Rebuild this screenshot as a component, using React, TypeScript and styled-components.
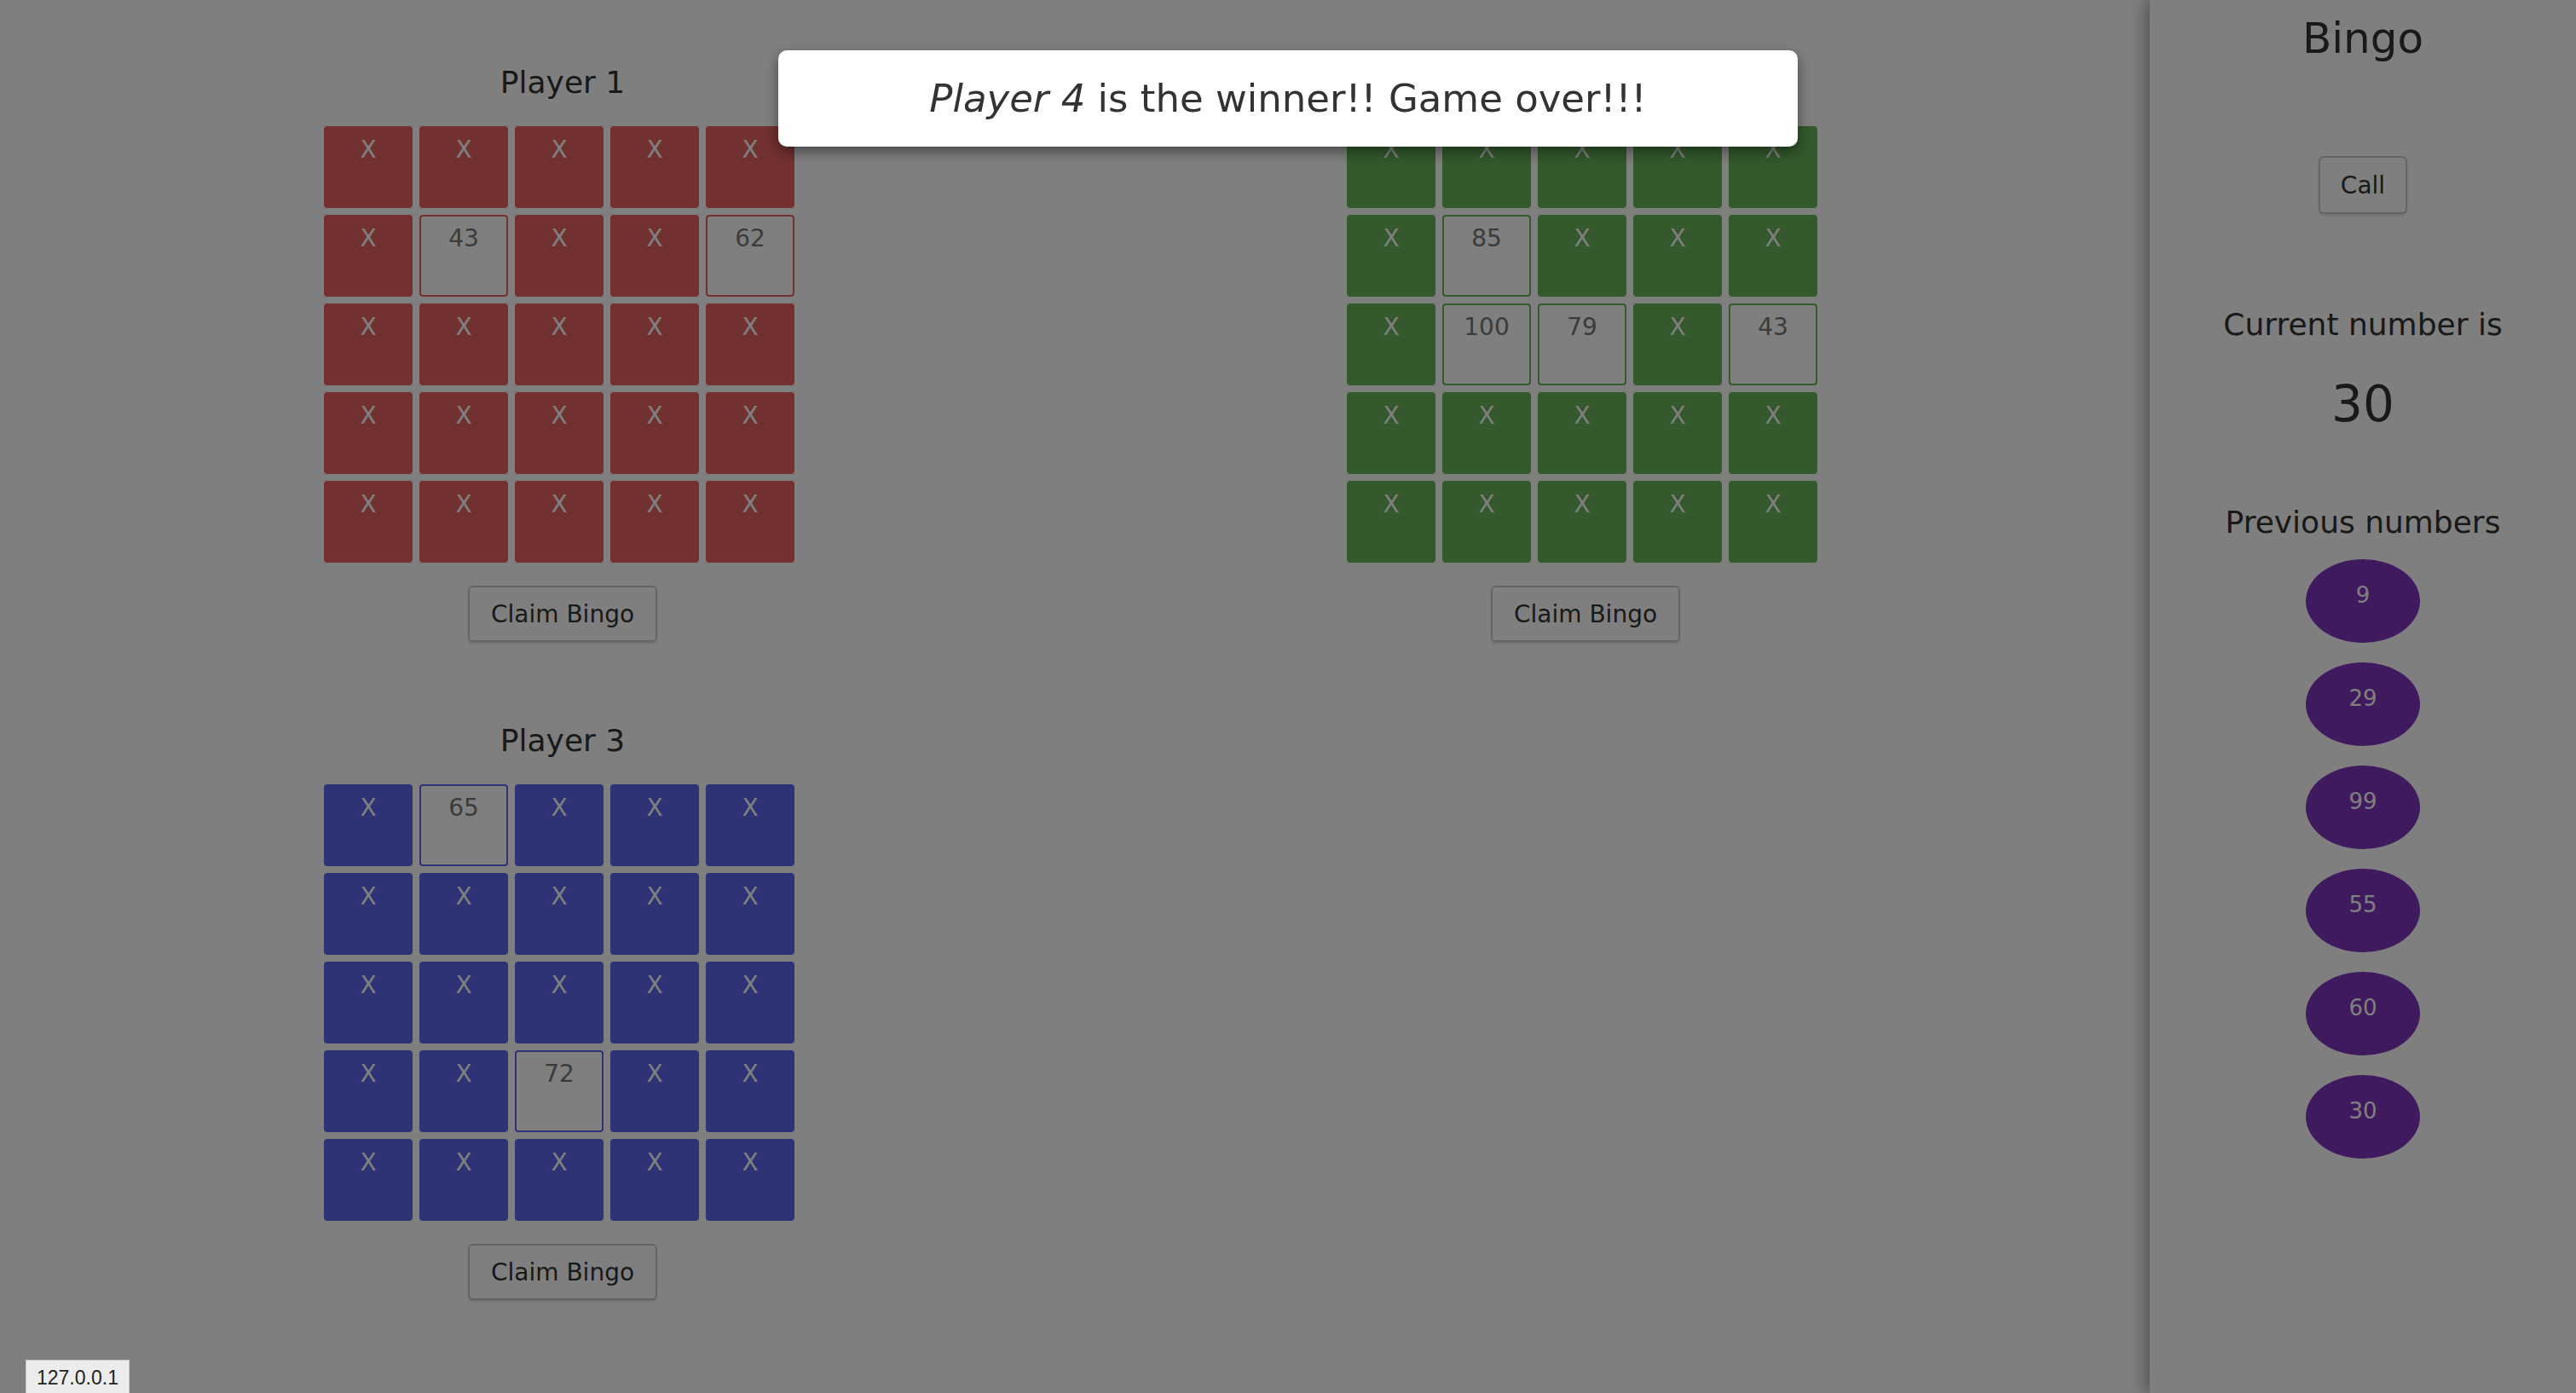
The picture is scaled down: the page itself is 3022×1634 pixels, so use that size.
import React from "react"
import styled, { createGlobalStyle } from "styled-components"

const GlobalStyle = createGlobalStyle`
  html, body {
    margin: 0;
    padding: 0;
    background: #fff;
  }
  * {
    box-sizing: border-box;
  }
`

type Player = {
  name: string
  color: string
  cells: (number | null)[]
}

const X = null

const players: Player[] = [
  {
    name: "Player 1",
    color: "#e46260",
    cells: [X, X, X, X, X, X, 43, X, X, 62, X, X, X, X, X, X, X, X, X, X, X, X, X, X, X],
  },
  {
    name: "Player 2",
    color: "#66b25a",
    cells: [X, X, X, X, X, X, 85, X, X, X, X, 100, 79, X, 43, X, X, X, X, X, X, X, X, X, X],
  },
  {
    name: "Player 3",
    color: "#5c64ec",
    cells: [X, 65, X, X, X, X, X, X, X, X, X, X, X, X, X, X, X, 72, X, X, X, X, X, X, X],
  },
]

const previous = [9, 29, 99, 55, 60, 30]

const Page = styled.div`
  display: flex;
  height: 100vh;
  overflow: hidden;
  font-family: "DejaVu Sans", "Noto Sans", sans-serif;
  color: #333;
`

const Main = styled.main`
  flex: 1;
  display: grid;
  grid-template-columns: repeat(2, 1200px);
  row-gap: 94px;
  align-content: start;
  padding: 75px 0 0 60px;
`

const Section = styled.section`
  display: flex;
  flex-direction: column;
  align-items: center;
`

const Title = styled.h3`
  margin: 0;
  font-size: 36px;
  line-height: 44px;
  font-weight: 400;
`

const Board = styled.div`
  display: grid;
  grid-template-columns: repeat(5, 104px);
  grid-auto-rows: 96px;
  gap: 8px;
  margin: 29px 8px 0 0;
`

const Cell = styled.div<{ $color: string; $marked: boolean }>`
  border: 2px solid ${p => p.$color};
  border-radius: 4px;
  background: ${p => (p.$marked ? p.$color : "transparent")};
  color: ${p => (p.$marked ? "#fff" : "#777")};
  font-size: 28px;
  line-height: 34px;
  padding-top: 9px;
  text-align: center;
`

const Button = styled.button<{ $w: number; $h: number }>`
  width: ${p => p.$w}px;
  height: ${p => p.$h}px;
  border: 2px solid #c8c8c8;
  border-radius: 6px;
  background: #fff;
  box-shadow: 0 2px 2px rgba(0, 0, 0, 0.12);
  font-family: inherit;
  font-size: 28px;
  color: #333;
  padding: 0;
`

const ClaimButton = styled(Button)`
  margin-top: 27px;
`

const Sidebar = styled.aside`
  position: relative;
  z-index: 1;
  width: 500px;
  flex-shrink: 0;
  background: #fff;
  box-shadow: -6px 0 18px rgba(0, 0, 0, 0.35);
  display: flex;
  flex-direction: column;
  align-items: center;
  padding-top: 15px;
`

const SideTitle = styled.h1`
  margin: 0;
  font-size: 50px;
  line-height: 60px;
  font-weight: 400;
`

const CallButton = styled(Button)`
  margin-top: 108px;
`

const Label = styled.div<{ $top: number }>`
  margin-top: ${p => p.$top}px;
  font-size: 36px;
  line-height: 44px;
`

const Current = styled.div`
  margin-top: 37px;
  font-size: 58px;
  line-height: 68px;
`

const Balls = styled.div`
  margin-top: 21px;
  display: flex;
  flex-direction: column;
  gap: 23px;
`

const Ball = styled.div`
  width: 134px;
  height: 98px;
  border-radius: 50%;
  background: #7e34bc;
  color: #fff;
  font-size: 26px;
  line-height: 32px;
  padding-top: 26px;
  text-align: center;
`

const Backdrop = styled.div`
  position: fixed;
  inset: 0;
  background: rgba(0, 0, 0, 0.5);
  z-index: 10;
`

const Modal = styled.div`
  position: fixed;
  top: 59px;
  left: 50%;
  transform: translateX(-50%);
  width: 1196px;
  height: 113px;
  z-index: 11;
  background: #fff;
  border-radius: 10px;
  box-shadow: 0 6px 16px rgba(0, 0, 0, 0.45);
  display: flex;
  align-items: center;
  justify-content: center;
  font-family: "DejaVu Sans", "Noto Sans", sans-serif;
  font-size: 45px;
  line-height: 54px;
  color: #333;
  white-space: pre;
`

const Status = styled.div`
  position: fixed;
  left: 30px;
  bottom: -14px;
  z-index: 12;
  background: #ececec;
  border: 1px solid #c9c9c9;
  padding: 7px 12px 18px;
  font-family: "Liberation Sans", Arial, sans-serif;
  font-size: 23px;
  line-height: 26px;
  color: #222;
`

function PlayerBoard({ player }: { player: Player }) {
  return (
    <Section>
      <Title>{player.name}</Title>
      <Board>
        {player.cells.map((n, i) => (
          <Cell key={i} $color={player.color} $marked={n === null}>
            {n === null ? "X" : n}
          </Cell>
        ))}
      </Board>
      <ClaimButton $w={222} $h={66}>Claim Bingo</ClaimButton>
    </Section>
  )
}

export default function App() {
  return (
    <>
      <GlobalStyle />
      <Page>
        <Main>
          {players.map(p => (
            <PlayerBoard key={p.name} player={p} />
          ))}
        </Main>
        <Sidebar>
          <SideTitle>Bingo</SideTitle>
          <CallButton $w={104} $h={68}>Call</CallButton>
          <Label $top={108}>Current number is</Label>
          <Current>30</Current>
          <Label $top={83}>Previous numbers</Label>
          <Balls>
            {previous.map(n => (
              <Ball key={n}>{n}</Ball>
            ))}
          </Balls>
        </Sidebar>
      </Page>
      <Backdrop />
      <Modal>
        <em>Player 4</em> is the winner!! Game over!!!
      </Modal>
      <Status>127.0.0.1</Status>
    </>
  )
}
